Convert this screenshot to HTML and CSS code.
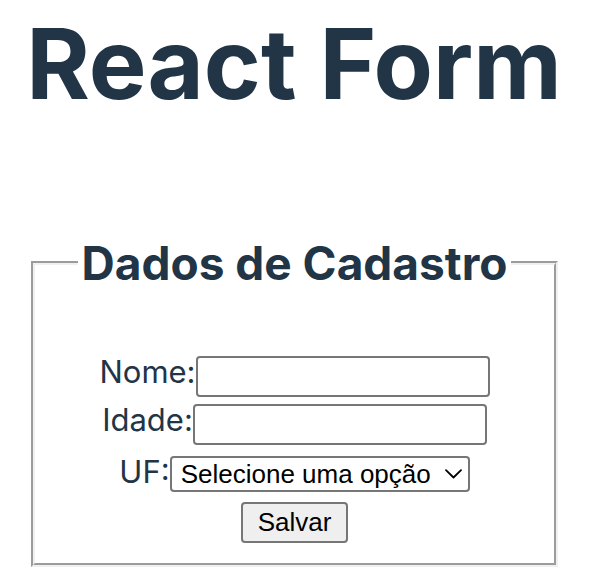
FILE: index.html
```html
<!DOCTYPE html>
<html lang="pt-BR">
<head>
<meta charset="utf-8">
<title>React Form</title>
<link rel="stylesheet" href="styles.css">
</head>
<body>
<div class="app">
  <h1 class="title">React Form</h1>
  <fieldset class="panel">
    <legend class="panel-legend">Dados de Cadastro</legend>
    <form class="form">
      <div class="row">
        <label class="label" for="nome">Nome:</label>
        <input id="nome" class="field" type="text">
      </div>
      <div class="row row-idade">
        <label class="label" for="idade">Idade:</label>
        <input id="idade" class="field" type="text">
      </div>
      <div class="row row-uf">
        <label class="label" for="uf">UF:</label>
        <span class="select-wrap">
          <select id="uf" class="select">
            <option>Selecione uma opção</option>
          </select>
          <svg class="chevron" width="17" height="10" viewBox="0 0 17 10" aria-hidden="true">
            <polyline points="1,1.2 8.5,8.5 16,1.2" fill="none" stroke="#000" stroke-width="1.8" stroke-linecap="round" stroke-linejoin="round"/>
          </svg>
        </span>
      </div>
      <div class="row row-btn">
        <button class="btn" type="button">Salvar</button>
      </div>
    </form>
  </fieldset>
</div>
</body>
</html>
```

FILE: styles.css
```css
html, body {
  margin: 0;
  padding: 0;
  background: #ffffff;
}

body {
  font-family: Inter, "Noto Sans", sans-serif;
  color: #213547;
}

.app {
  width: 588px;
  box-sizing: border-box;
  padding: 0 30px 0 31px;
  text-align: center;
}

.title {
  margin: 14px -30px 0 -31px;
  font-size: 97px;
  line-height: 100px;
  font-weight: 700;
  letter-spacing: 0;
  white-space: nowrap;
}

.panel {
  margin: 123px 0 0;
  padding: 67px 0 20px;
  border: 4px groove #f0f0f0;
  min-width: 0;
}

.panel-legend {
  margin: 0 auto;
  padding: 0 4px;
  font-size: 46px;
  line-height: 52px;
  font-weight: 700;
  white-space: nowrap;
}

.form {
  margin: 0;
  display: flex;
  flex-direction: column;
}

.row {
  display: flex;
  justify-content: center;
  align-items: flex-start;
}

.row-idade {
  margin-top: 7px;
}

.row-uf {
  margin-top: 11px;
}

.row-btn {
  margin-top: 10px;
}

.label {
  font-size: 31px;
  line-height: 32px;
  font-weight: 400;
}

.field {
  width: 294px;
  height: 41px;
  box-sizing: border-box;
  margin: 0;
  padding: 0 4px;
  border: 2px solid #767676;
  border-radius: 4px;
  background: #ffffff;
  font-family: "Liberation Sans", Arial, sans-serif;
  font-size: 26px;
}

.select-wrap {
  position: relative;
  display: inline-block;
}

.select {
  -webkit-appearance: none;
  appearance: none;
  width: 300px;
  height: 36px;
  box-sizing: border-box;
  margin: 0;
  padding: 0 0 0 9px;
  border: 2px solid #767676;
  border-radius: 4px;
  background: #ffffff;
  color: #000000;
  font-family: "Liberation Sans", Arial, sans-serif;
  font-size: 26px;
}

.chevron {
  position: absolute;
  right: 8px;
  top: 13px;
  pointer-events: none;
}

.btn {
  width: 107px;
  height: 41px;
  box-sizing: border-box;
  margin: 0;
  padding: 0;
  border: 2px solid #767676;
  border-radius: 4px;
  background: #efefef;
  color: #000000;
  font-family: "Liberation Sans", Arial, sans-serif;
  font-size: 26px;
}
```
